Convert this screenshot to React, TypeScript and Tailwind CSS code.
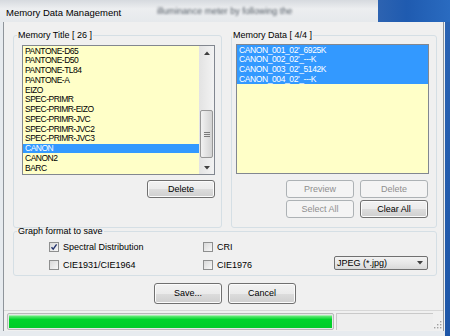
import clsx from "clsx";

const TITLES = [
  "PANTONE-D65",
  "PANTONE-D50",
  "PANTONE-TL84",
  "PANTONE-A",
  "EIZO",
  "SPEC-PRIMR",
  "SPEC-PRIMR-EIZO",
  "SPEC-PRIMR-JVC",
  "SPEC-PRIMR-JVC2",
  "SPEC-PRIMR-JVC3",
  "CANON",
  "CANON2",
  "BARC",
];

const DATA = [
  "CANON_001_02'_6925K",
  "CANON_002_02'_---K",
  "CANON_003_02'_5142K",
  "CANON_004_02'_---K",
];

function WinButton({
  label,
  disabled,
  className,
}: {
  label: string;
  disabled?: boolean;
  className?: string;
}) {
  return (
    <button
      disabled={disabled}
      className={clsx(
        "rounded-[3px] border text-[9px] leading-none",
        disabled
          ? "border-[#adb2b5] bg-[#f4f4f4] text-[#8f8f8f]"
          : "border-[#707070] bg-[linear-gradient(#f2f2f2_0%,#ebebeb_50%,#dddddd_50%,#cfcfcf_100%)] text-black shadow-[inset_0_0_0_1px_#fbfbfb]",
        className,
      )}
    >
      {label}
    </button>
  );
}

function CheckBox({ label, checked }: { label: string; checked?: boolean }) {
  return (
    <div className="flex h-[10px] items-center gap-[4px]">
      <span className="flex h-[10px] w-[10px] items-center justify-center border border-[#8e8f8f] bg-[linear-gradient(135deg,#d9d9d9,#f7f7f7)]">
        {checked && (
          <svg width="8" height="8" viewBox="0 0 8 8">
            <path d="M1.5 4.2 L3.2 6.2 L6.6 1.3" fill="none" stroke="#23336d" strokeWidth="1.4" />
          </svg>
        )}
      </span>
      <span className="text-[9px] leading-none text-black">{label}</span>
    </div>
  );
}

function Arrow({ up }: { up?: boolean }) {
  return (
    <svg width="6" height="4" viewBox="0 0 6 4">
      <path d={up ? "M0 4 L3 0.5 L6 4 Z" : "M0 0 L3 3.5 L6 0 Z"} fill="#404040" />
    </svg>
  );
}

export default function App() {
  return (
    <div className="flex h-[336px] w-[450px] flex-col overflow-hidden bg-[#e4e8ec] font-['Liberation_Sans',Arial,sans-serif] text-black">
      {/* Title bar */}
      <div className="flex h-[22px]">
        <div className="flex flex-1 items-center bg-[linear-gradient(#d6dadf,#eceef0_40%,#e6e9ec)]">
          <span className="ml-[6px] mt-[4px] text-[9.5px] leading-none">Memory Data Management</span>
          <span className="ml-[36px] text-[9px] leading-none text-[#4f5862] blur-[1.2px]">
            illuminance meter by following the
          </span>
        </div>
        <div className="w-[72px] bg-[linear-gradient(90deg,#2d63b1,#1f5bb0_40%,#2a6bc0)]" />
      </div>

      <div className="flex flex-1">
        <div className="flex w-[445px] flex-col">
          <div className="flex flex-1">
            <div className="w-[3px] bg-[#e7ebef]" />

            {/* Client area */}
            <div className="flex w-[441px] flex-col border-x border-[#8f959b] bg-[#f0f0f0]">
              <div className="flex gap-[9px] pl-[9px] pr-[5px] pt-[10px]">
                {/* Memory Title */}
                <fieldset className="h-[196px] w-[209px] rounded-[3px] border border-[#d5dfe5]">
                  <legend className="ml-[3px] px-[1px] text-[9px] leading-[6px]">Memory Title [ 26 ]</legend>
                  <div className="ml-[8px] mt-[7px] flex h-[130px] w-[193px] border border-[#828790] bg-[#ffffc8]">
                    <div className="flex flex-1 flex-col">
                      {TITLES.map((t) => (
                        <div
                          key={t}
                          className={clsx(
                            "flex h-[9.75px] items-center pl-[2px] text-[8.5px] leading-none tracking-[-0.5px]",
                            t === "CANON" && "bg-[#3399ff] text-white",
                          )}
                        >
                          {t}
                        </div>
                      ))}
                    </div>
                    {/* Scrollbar */}
                    <div className="flex w-[15px] flex-col bg-[linear-gradient(90deg,#e3e3e3,#f3f3f3)]">
                      <div className="flex h-[13px] items-center justify-center">
                        <Arrow up />
                      </div>
                      <div className="h-[51px]" />
                      <div className="mx-[1px] flex h-[48px] flex-col items-center justify-center gap-[1px] rounded-[2px] border border-[#979797] bg-[linear-gradient(90deg,#f2f2f2,#e2e2e2_50%,#d3d3d3)]">
                        <span className="h-px w-[6px] bg-[#7a7a7a]" />
                        <span className="h-px w-[6px] bg-[#7a7a7a]" />
                        <span className="h-px w-[6px] bg-[#7a7a7a]" />
                      </div>
                      <div className="flex-1" />
                      <div className="flex h-[13px] items-center justify-center">
                        <Arrow />
                      </div>
                    </div>
                  </div>
                  <div className="mr-[6px] mt-[5px] flex justify-end">
                    <WinButton label="Delete" className="h-[18px] w-[68px]" />
                  </div>
                </fieldset>

                {/* Memory Data */}
                <fieldset className="h-[196px] w-[206px] rounded-[3px] border border-[#d5dfe5]">
                  <legend className="ml-[0px] px-[1px] text-[9px] leading-[6px]">Memory Data [ 4/4 ]</legend>
                  <div className="ml-[4px] mt-[6px] flex h-[130px] w-[193px] flex-col border border-[#828790] bg-[#ffffc8]">
                    {DATA.map((d) => (
                      <div
                        key={d}
                        className="flex h-[9.75px] items-center bg-[#3399ff] pl-[2px] text-[8.5px] leading-none tracking-[-0.4px] text-white"
                      >
                        {d}
                      </div>
                    ))}
                  </div>
                  <div className="ml-[54px] mt-[6px] grid w-[142px] grid-cols-2 gap-x-[6px] gap-y-[2px]">
                    <WinButton label="Preview" disabled className="h-[18px]" />
                    <WinButton label="Delete" disabled className="h-[18px]" />
                    <WinButton label="Select All" disabled className="h-[18px]" />
                    <WinButton label="Clear All" className="h-[18px]" />
                  </div>
                </fieldset>
              </div>

              {/* Graph format */}
              <div className="pl-[9px] pr-[5px]">
                <fieldset className="h-[48px] w-[424px] rounded-[3px] border border-[#d5dfe5]">
                  <legend className="ml-[3px] px-[1px] text-[9px] leading-[6px]">Graph format to save</legend>
                  <div className="flex pl-[35px] pt-[8px]">
                    <div className="flex w-[154px] flex-col gap-[8px]">
                      <CheckBox label="Spectral Distribution" checked />
                      <CheckBox label="CIE1931/CIE1964" />
                    </div>
                    <div className="flex w-[131px] flex-col gap-[8px]">
                      <CheckBox label="CRI" />
                      <CheckBox label="CIE1976" />
                    </div>
                    <div className="pt-[14px]">
                      <div className="flex h-[14px] w-[94px] items-center justify-between rounded-[2px] border border-[#707070] bg-[linear-gradient(#f2f2f2,#e8e8e8_50%,#d9d9d9)] pl-[2px] pr-[4px]">
                        <span className="text-[9px] leading-none">JPEG (*.jpg)</span>
                        <Arrow />
                      </div>
                    </div>
                  </div>
                </fieldset>
              </div>

              {/* Save / Cancel */}
              <div className="mt-[7px] flex gap-[6px] pl-[150px]">
                <WinButton label="Save..." className="h-[21px] w-[68px]" />
                <WinButton label="Cancel" className="h-[21px] w-[68px]" />
              </div>

              {/* Status bar */}
              <div className="mt-[6px] flex h-[21px] items-center border-t border-[#d7d7d7] pl-[3px]">
                <div className="h-[17px] w-[327px] rounded-[2px] border border-[#b8b8b8] bg-[#e6e6e6] p-px">
                  <div className="h-full w-full bg-[linear-gradient(#c9f7cc_0%,#52e56a_12%,#00d42a_35%,#00cc28_100%)]" />
                </div>
                <div className="ml-[2px] h-[17px] w-[97px] border-l border-t border-[#c9c9c9] bg-[#eeeeee]" />
                <div className="flex h-[17px] flex-1 items-end justify-end pb-[1px] pr-[1px]">
                  <svg width="9" height="9" viewBox="0 0 9 9">
                    <rect x="7" y="1" width="1.4" height="1.4" fill="#a0a0a0" />
                    <rect x="4" y="4" width="1.4" height="1.4" fill="#a0a0a0" />
                    <rect x="7" y="4" width="1.4" height="1.4" fill="#a0a0a0" />
                    <rect x="1" y="7" width="1.4" height="1.4" fill="#a0a0a0" />
                    <rect x="4" y="7" width="1.4" height="1.4" fill="#a0a0a0" />
                    <rect x="7" y="7" width="1.4" height="1.4" fill="#a0a0a0" />
                  </svg>
                </div>
              </div>
            </div>

            <div className="w-px bg-[#eef1f4]" />
          </div>
          <div className="h-[5px] bg-[#e7ebef]" />
        </div>
        <div className="w-[5px] bg-[linear-gradient(#2a63b3,#1d56a8)]" />
      </div>
    </div>
  );
}
